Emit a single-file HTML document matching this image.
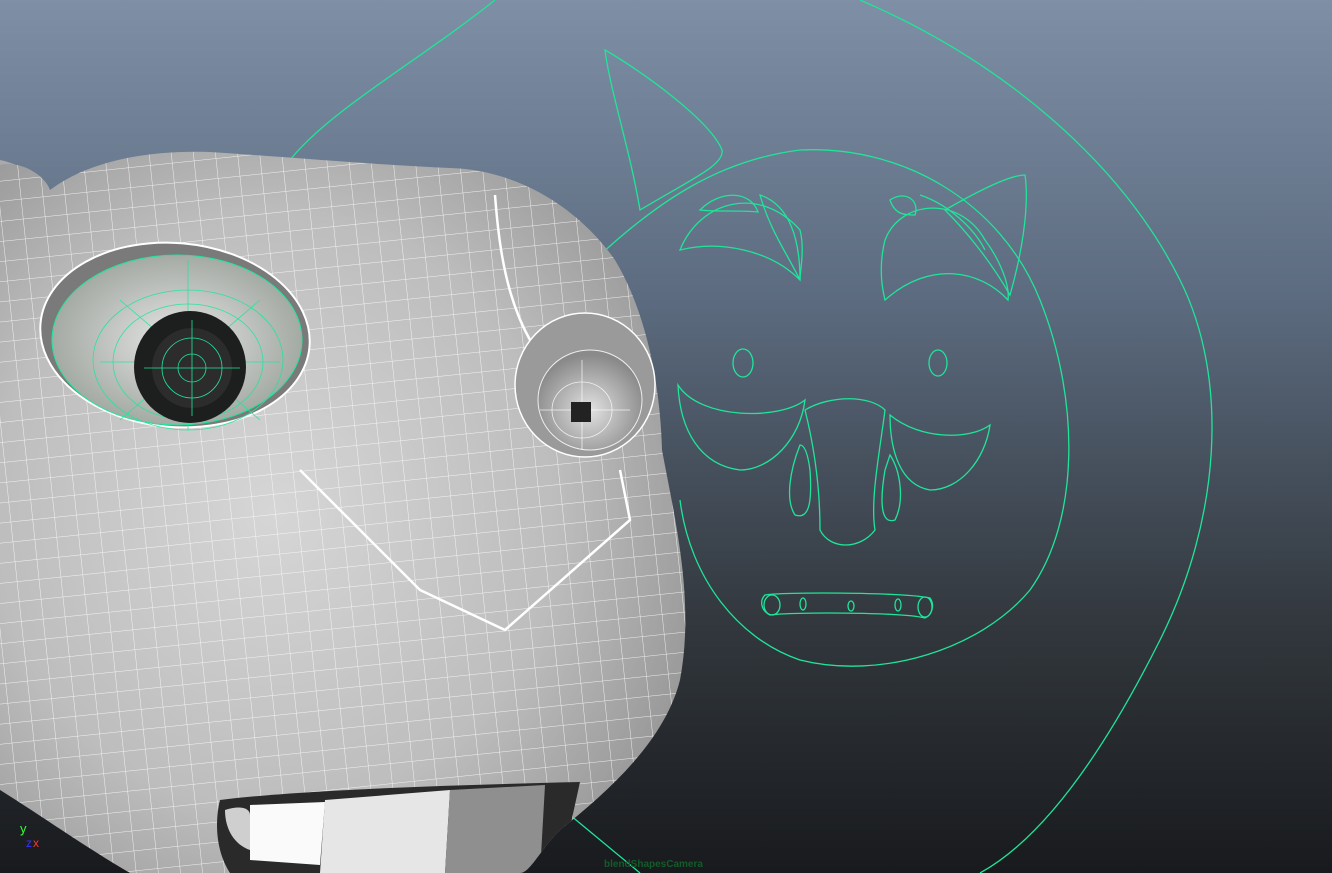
<!DOCTYPE html>
<html><head><meta charset="utf-8"><style>
html,body{margin:0;padding:0;width:1332px;height:873px;overflow:hidden;background:#000}
svg{display:block}
</style></head><body>
<svg width="1332" height="873" viewBox="0 0 1332 873" xmlns="http://www.w3.org/2000/svg">
<defs>
<linearGradient id="bg" x1="0" y1="0" x2="0" y2="1">
<stop offset="0" stop-color="#7e8fa6"/><stop offset="0.35" stop-color="#5b6a7e"/><stop offset="0.7" stop-color="#33393f"/><stop offset="1" stop-color="#181a1d"/>
</linearGradient>
<radialGradient id="head" cx="0.4" cy="0.5" r="0.75">
<stop offset="0" stop-color="#d6d6d6"/><stop offset="0.55" stop-color="#bdbdbd"/><stop offset="0.85" stop-color="#9a9a9a"/><stop offset="1" stop-color="#7a7a7a"/>
</radialGradient>
<radialGradient id="eyeb" cx="0.5" cy="0.5" r="0.5">
<stop offset="0" stop-color="#e6e6e6"/><stop offset="1" stop-color="#a4aaa4"/>
</radialGradient>
<radialGradient id="eye2" cx="0.5" cy="0.6" r="0.55">
<stop offset="0" stop-color="#e2e2e2"/><stop offset="1" stop-color="#8a8a8a"/>
</radialGradient>
<pattern id="grid" width="22" height="20" patternUnits="userSpaceOnUse" patternTransform="rotate(-6)">
<path d="M0 0H22M0 0V20" stroke="#fff" stroke-width="1" fill="none" opacity="0.8"/>
</pattern>
<clipPath id="hc"><path id="hp" d="M0 165 C20 160 45 175 50 190 C90 160 150 150 210 152 C300 158 380 165 450 168 C520 170 580 210 615 260 C645 310 660 380 662 450 C675 520 695 600 680 680 C665 740 610 790 560 830 C540 850 530 873 520 873 L130 873 C90 850 40 815 0 790 Z"/></clipPath>
</defs>
<rect width="1332" height="873" fill="url(#bg)"/>
<g fill="none" stroke="#1fe59a" stroke-width="1.3">
<path d="M495 0 C420 60 330 110 290 160"/>
<path d="M860 0 C1000 60 1120 160 1180 280 C1230 380 1220 520 1160 640 C1100 760 1040 840 980 873"/>
<path d="M600 255 C660 200 720 160 800 150 C900 145 1000 200 1040 300 C1080 400 1080 520 1030 590 C980 650 880 680 800 660 C740 640 690 580 680 500"/>
<path d="M605 50 C640 70 710 120 722 150 C725 165 690 180 640 210 C630 150 610 90 605 50Z"/>
<path d="M945 210 C980 190 1010 175 1025 175 C1030 210 1020 260 1010 295 C990 260 965 230 945 210Z"/>
<path d="M680 250 C700 200 760 185 800 230 C805 250 800 270 800 280 C770 250 720 240 680 250Z"/>
<path d="M700 210 C720 190 750 190 758 212 C740 210 715 212 700 210Z"/>
<path d="M760 195 C790 205 800 240 800 280 C785 250 770 230 760 195Z"/>
<path d="M885 240 C900 200 960 195 985 240 C1000 260 1010 285 1008 300 C980 270 930 260 885 300 C880 280 880 260 885 240Z"/>
<path d="M890 200 C905 190 920 200 915 215 C905 215 895 215 890 200Z"/>
<path d="M920 195 C950 205 975 230 985 250"/>
<ellipse cx="743" cy="363" rx="10" ry="14"/>
<ellipse cx="938" cy="363" rx="9" ry="13"/>
<path d="M678 385 C700 420 780 420 805 400 C800 440 770 470 740 470 C700 465 680 430 678 385Z"/>
<path d="M890 415 C920 440 970 440 990 425 C985 460 960 490 930 490 C900 485 890 450 890 415Z"/>
<path d="M805 410 C830 395 870 395 885 410 C880 450 870 500 875 530 C860 550 830 550 820 530 C820 490 815 450 805 410Z"/>
<path d="M800 445 C790 470 785 500 795 515 C810 520 812 500 810 470 C808 455 805 445 800 445Z"/>
<path d="M890 455 C900 470 905 500 895 520 C880 525 880 500 885 470Z"/>
<path d="M765 595 C780 592 900 592 930 598 C935 605 932 615 925 618 C900 612 790 612 770 615 C760 610 760 600 765 595Z"/>
<ellipse cx="772" cy="605" rx="8" ry="10"/><ellipse cx="925" cy="607" rx="7" ry="10"/>
<ellipse cx="803" cy="604" rx="3" ry="6"/><ellipse cx="851" cy="606" rx="3" ry="5"/><ellipse cx="898" cy="605" rx="3" ry="6"/>
<path d="M570 815 L640 873"/>
</g>
<path d="M0 160 C25 165 40 180 50 192 L0 215Z" fill="#aaa"/>
<use href="#hp" fill="url(#head)"/>
<g clip-path="url(#hc)">
<rect x="-100" y="100" width="900" height="800" fill="url(#grid)"/>
<path d="M0 790 C40 815 90 850 130 873 L0 873Z" fill="#1b1d20"/>
<path d="M220 800 C300 790 450 785 580 782 L560 873 L230 873 C215 850 215 820 220 800Z" fill="#2a2a2a"/>
<path d="M250 805 L325 802 L320 865 L250 860Z" fill="#fafafa"/>
<path d="M325 800 L450 790 L445 873 L320 873Z" fill="#e6e6e6"/>
<path d="M450 790 L545 785 L540 873 L445 873Z" fill="#8f8f8f"/>
<path d="M225 810 C240 805 250 808 250 815 L250 850 C235 845 225 830 225 810Z" fill="#cfcfcf"/>
<path d="M300 470 L420 590 L505 630 L630 520 L620 470" fill="none" stroke="#fff" stroke-width="2.5"/>
<path d="M495 195 C500 260 510 330 560 380" fill="none" stroke="#fff" stroke-width="2.5"/>
</g>
<ellipse cx="175" cy="335" rx="135" ry="92" fill="#7a7a7a" stroke="#fff" stroke-width="2" transform="rotate(5 175 335)"/>
<ellipse cx="177" cy="340" rx="125" ry="85" fill="url(#eyeb)" stroke="#1fe59a" stroke-width="1"/>
<g stroke="#1fe59a" stroke-width="0.8" fill="none" opacity="0.9">
<ellipse cx="188" cy="360" rx="95" ry="70"/><ellipse cx="188" cy="362" rx="75" ry="58"/>
<path d="M188 260V430M100 362H280M120 300L260 420M260 300L120 420"/>
</g>
<circle cx="190" cy="367" r="56" fill="#1d1e1e"/>
<circle cx="192" cy="368" r="40" fill="#2c2c2c"/>
<g stroke="#1fe59a" stroke-width="0.8" fill="none"><circle cx="192" cy="368" r="30"/><circle cx="192" cy="368" r="14"/><path d="M192 320V416M144 368H240"/></g>
<ellipse cx="585" cy="385" rx="70" ry="72" fill="#9a9a9a" stroke="#fff" stroke-width="1.5"/>
<ellipse cx="590" cy="400" rx="52" ry="50" fill="url(#eye2)" stroke="#eee"/>
<g stroke="#fff" stroke-width="0.8" fill="none" opacity="0.8"><ellipse cx="582" cy="410" rx="30" ry="28"/><path d="M582 360V450M540 410H630"/></g>
<rect x="571" y="402" width="20" height="20" fill="#222"/>
<text x="20" y="833" font-family="Liberation Sans,sans-serif" font-size="13" fill="#3f3">y</text>
<text x="26" y="847" font-family="Liberation Sans,sans-serif" font-size="12" fill="#33f">z</text>
<text x="33" y="847" font-family="Liberation Sans,sans-serif" font-size="12" fill="#f33">x</text>
<text x="604" y="867" font-family="Liberation Sans,sans-serif" font-size="10" font-weight="bold" fill="#135c2a">blendShapesCamera</text>
</svg>
</body></html>
